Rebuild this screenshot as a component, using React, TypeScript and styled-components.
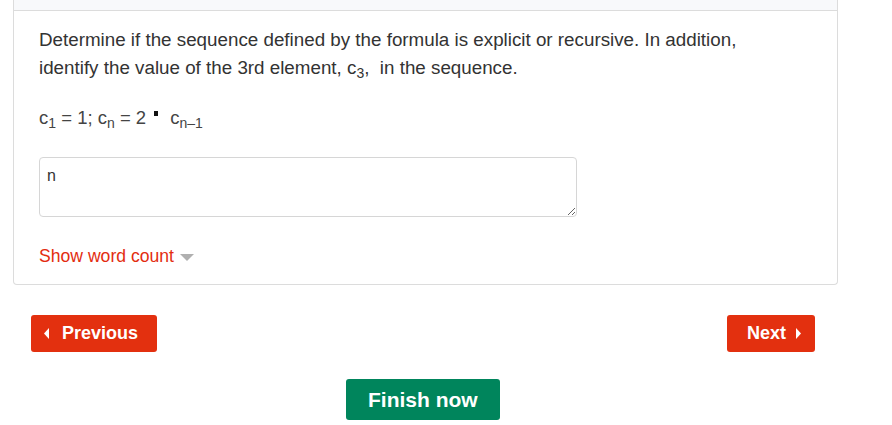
import styled, { createGlobalStyle } from 'styled-components'

const GlobalStyle = createGlobalStyle`
  html, body {
    margin: 0;
    padding: 0;
    background: #fff;
  }
  body {
    font-family: 'Liberation Sans', Arial, sans-serif;
    color: #333;
  }
`

const Page = styled.div`
  width: 892px;
  height: 425px;
  overflow: hidden;
`

const Card = styled.div`
  margin-left: 13px;
  width: 825px;
  box-sizing: border-box;
  border: 1px solid #dcdcdc;
  border-top: none;
  border-radius: 0 0 4px 4px;
  background: #fff;
`

const CardHeader = styled.div`
  height: 10px;
  background: #f8f9fb;
  border-bottom: 1px solid #dcdcdc;
`

const CardBody = styled.div`
  padding: 15px 25px 14px 25px;
`

const Question = styled.p`
  margin: 0;
  width: 720px;
  font-size: 18.8px;
  line-height: 28px;
  color: #333;
`

const Formula = styled.p`
  margin: 22px 0 0;
  font-size: 18.5px;
  line-height: 28px;
  color: #444;
`

const Sub = styled.sub`
  font-size: 14px;
  line-height: 0;
  vertical-align: -4px;
`

const Dot = styled.span`
  display: inline-block;
  width: 4px;
  height: 5px;
  background: #111;
  vertical-align: 8px;
  margin: 0 12px 0 3px;
`

const Answer = styled.textarea`
  display: block;
  margin-top: 25px;
  width: 538px;
  height: 60px;
  box-sizing: border-box;
  border: 1px solid #d6d6d6;
  border-radius: 4px;
  padding: 7px 7px;
  font-family: 'Liberation Sans', Arial, sans-serif;
  font-size: 16px;
  line-height: 22px;
  color: #333;
  outline: none;
`

const WordCount = styled.div`
  margin-top: 25px;
  font-size: 17.6px;
  line-height: 28px;
  color: #e32d10;
  display: flex;
  align-items: center;
  gap: 6px;
`

const Triangle = styled.span`
  display: inline-block;
  width: 0;
  height: 0;
  border-left: 7px solid transparent;
  border-right: 7px solid transparent;
  border-top: 7px solid #b0b0b0;
  margin-top: 2px;
`

const NavRow = styled.div`
  display: flex;
  justify-content: space-between;
  padding: 0 77px 0 31px;
  margin-top: 30px;
`

const Button = styled.button<{ $tone: 'red' | 'green' }>`
  display: inline-flex;
  align-items: center;
  border: none;
  border-radius: 3px;
  background: ${(p) => (p.$tone === 'red' ? '#e3300f' : '#00855c')};
  color: #fff;
  font-family: 'Liberation Sans', Arial, sans-serif;
  font-weight: bold;
  cursor: pointer;
`

const NavButton = styled(Button)<{ $pad: string; $gap: number }>`
  height: 37px;
  font-size: 18px;
  padding: ${(p) => p.$pad};
  gap: ${(p) => p.$gap}px;
`

const FinishRow = styled.div`
  margin-top: 27px;
  padding-left: 346px;
`

const FinishButton = styled(Button)`
  height: 41px;
  font-size: 21px;
  padding: 0 22px 0 22px;
`

const Caret = ({ dir }: { dir: 'left' | 'right' }) => (
  <svg width="5" height="11" viewBox="0 0 5 11">
    {dir === 'left' ? <path d="M5 0 L0 5.5 L5 11 Z" fill="#fff" /> : <path d="M0 0 L5 5.5 L0 11 Z" fill="#fff" />}
  </svg>
)

export default function App() {
  return (
    <Page>
      <GlobalStyle />
      <Card>
        <CardHeader />
        <CardBody>
          <Question>
            Determine if the sequence defined by the formula is explicit or recursive. In addition,
            identify the value of the 3rd element, c<Sub>3</Sub>,&nbsp; in the sequence.
          </Question>
          <Formula>
            c<Sub>1</Sub> = 1; c<Sub>n</Sub> = 2 <Dot />c<Sub>n–1</Sub>
          </Formula>
          <Answer defaultValue="n" />
          <WordCount>
            Show word count <Triangle />
          </WordCount>
        </CardBody>
      </Card>
      <NavRow>
        <NavButton $tone="red" $pad="0 19px 0 13px" $gap={13}>
          <Caret dir="left" />
          Previous
        </NavButton>
        <NavButton $tone="red" $pad="0 14px 0 20px" $gap={10}>
          Next
          <Caret dir="right" />
        </NavButton>
      </NavRow>
      <FinishRow>
        <FinishButton $tone="green">Finish now</FinishButton>
      </FinishRow>
    </Page>
  )
}
